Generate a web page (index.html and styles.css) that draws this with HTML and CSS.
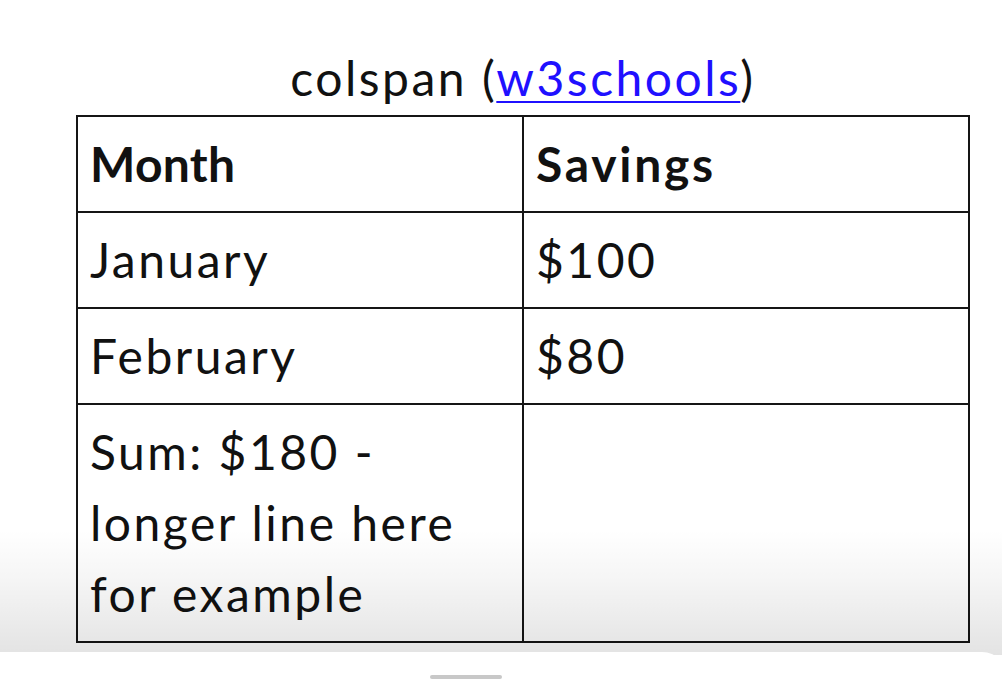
FILE: index.html
```html
<!DOCTYPE html>
<html>
<head>
<meta charset="utf-8">
<link rel="stylesheet" href="styles.css">
</head>
<body>
<main class="page">
  <table class="savings">
    <caption class="title">colspan (<a class="link" href="#">w3schools</a>)</caption>
    <tr>
      <th class="head-month">Month</th>
      <th class="head-savings">Savings</th>
    </tr>
    <tr>
      <td>January</td>
      <td>$100</td>
    </tr>
    <tr>
      <td>February</td>
      <td>$80</td>
    </tr>
    <tr>
      <td>Sum: $180 - longer line here for example</td>
      <td></td>
    </tr>
  </table>
</main>
<div class="shade"></div>
<div class="sheet"><div class="handle"></div></div>
</body>
</html>
```
FILE: styles.css
```css
html, body {
  margin: 0;
  padding: 0;
  background: #fff;
  overflow: hidden;
  height: 690px;
}
body {
  font-family: Lato, "Open Sans", sans-serif;
  color: #111;
}
.page {
  padding: 53px 0 0 76px;
}
.savings {
  border-collapse: collapse;
  width: 894px;
  table-layout: fixed;
}
.title {
  font-size: 48px;
  line-height: 50px;
  letter-spacing: 2.5px;
  padding-bottom: 12px;
  color: #111;
}
.link {
  color: #1f10ff;
  text-decoration: underline;
  text-decoration-thickness: 2px;
  text-underline-offset: 5px;
}
.savings th,
.savings td {
  border: 2px solid #151515;
  font-size: 48px;
  line-height: 71px;
  letter-spacing: 2.5px;
  padding: 11px 12px 12px 12px;
  text-align: left;
  vertical-align: top;
  font-weight: 400;
}
.savings th {
  font-weight: 700;
}
.savings .head-month {
  letter-spacing: 0.3px;
}
.savings .head-savings {
  letter-spacing: 2.7px;
}
.shade {
  position: absolute;
  left: 0;
  right: 0;
  top: 530px;
  height: 125px;
  background: linear-gradient(to bottom, rgba(0,0,0,0) 0%, rgba(0,0,0,0.04) 40%, rgba(0,0,0,0.11) 100%);
  pointer-events: none;
}
.sheet {
  position: absolute;
  left: -30px;
  right: -6px;
  top: 652px;
  height: 38px;
  background: #fff;
  border-radius: 0 26px 0 0;
}
.handle {
  position: absolute;
  left: 460px;
  top: 23px;
  width: 72px;
  height: 4px;
  border-radius: 2px;
  background: #c8c8c8;
}
```
